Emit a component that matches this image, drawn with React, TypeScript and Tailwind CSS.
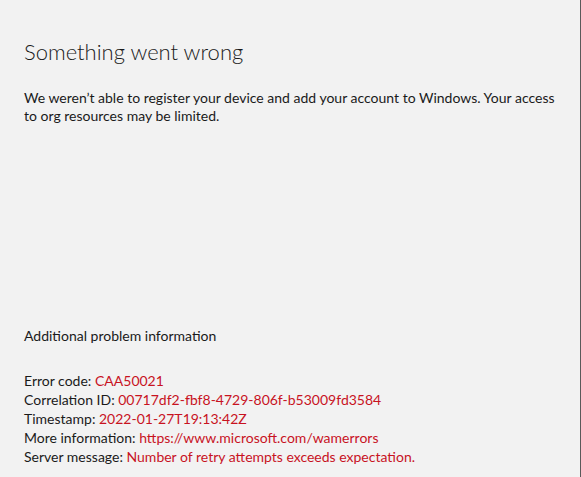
import React from "react";

const details: [string, string][] = [
  ["Error code:", "CAA50021"],
  ["Correlation ID:", "00717df2-fbf8-4729-806f-b53009fd3584"],
  ["Timestamp:", "2022-01-27T19:13:42Z"],
  ["More information:", "https://www.microsoft.com/wamerrors"],
  ["Server message:", "Number of retry attempts exceeds expectation."],
];

export default function App() {
  return (
    <div
      className="h-[477px] w-[581px] overflow-hidden border-r border-[#5a5a5a] bg-[#f2f2f2] text-[#1a1a1a] flex flex-col pl-6 pr-4 pt-[38px]"
      style={{ fontFamily: '"Lato", "Liberation Sans", sans-serif' }}
    >
      <h1 className="text-[22px] leading-[28px] font-light">Something went wrong</h1>
      <p className="mt-[23px] text-[14px] leading-[18px] max-w-[540px]">
        We weren’t able to register your device and add your account to Windows. Your access to org resources may be
        limited.
      </p>
      <div className="mt-[201px] text-[14px] leading-[19px]">Additional problem information</div>
      <div className="mt-[26px] flex flex-col text-[14px] leading-[19px]">
        {details.map(([label, value]) => (
          <div key={label}>
            {label} <span className="text-[#c8131f]">{value}</span>
          </div>
        ))}
      </div>
    </div>
  );
}
